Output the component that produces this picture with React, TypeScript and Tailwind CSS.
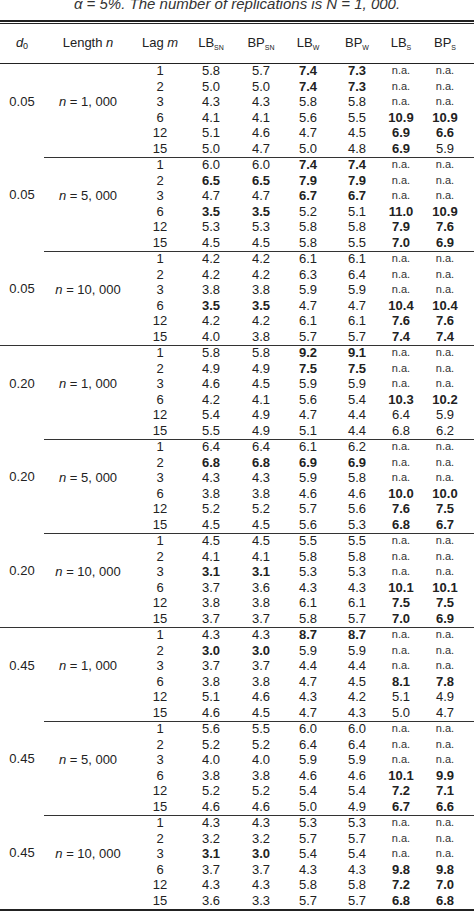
type Block = { n: string; rows: string[][] };
type Group = { d: string; blocks: Block[] };

// "*" prefix = bold
const GROUPS: Group[] = [
  {
    d: '0.05',
    blocks: [
      {
        n: '1, 000',
        rows: [
          ['1', '5.8', '5.7', '*7.4', '*7.3', 'n.a.', 'n.a.'],
          ['2', '5.0', '5.0', '*7.4', '*7.3', 'n.a.', 'n.a.'],
          ['3', '4.3', '4.3', '5.8', '5.8', 'n.a.', 'n.a.'],
          ['6', '4.1', '4.1', '5.6', '5.5', '*10.9', '*10.9'],
          ['12', '5.1', '4.6', '4.7', '4.5', '*6.9', '*6.6'],
          ['15', '5.0', '4.7', '5.0', '4.8', '*6.9', '5.9'],
        ],
      },
      {
        n: '5, 000',
        rows: [
          ['1', '6.0', '6.0', '*7.4', '*7.4', 'n.a.', 'n.a.'],
          ['2', '*6.5', '*6.5', '*7.9', '*7.9', 'n.a.', 'n.a.'],
          ['3', '4.7', '4.7', '*6.7', '*6.7', 'n.a.', 'n.a.'],
          ['6', '*3.5', '*3.5', '5.2', '5.1', '*11.0', '*10.9'],
          ['12', '5.3', '5.3', '5.8', '5.8', '*7.9', '*7.6'],
          ['15', '4.5', '4.5', '5.8', '5.5', '*7.0', '*6.9'],
        ],
      },
      {
        n: '10, 000',
        rows: [
          ['1', '4.2', '4.2', '6.1', '6.1', 'n.a.', 'n.a.'],
          ['2', '4.2', '4.2', '6.3', '6.4', 'n.a.', 'n.a.'],
          ['3', '3.8', '3.8', '5.9', '5.9', 'n.a.', 'n.a.'],
          ['6', '*3.5', '*3.5', '4.7', '4.7', '*10.4', '*10.4'],
          ['12', '4.2', '4.2', '6.1', '6.1', '*7.6', '*7.6'],
          ['15', '4.0', '3.8', '5.7', '5.7', '*7.4', '*7.4'],
        ],
      },
    ],
  },
  {
    d: '0.20',
    blocks: [
      {
        n: '1, 000',
        rows: [
          ['1', '5.8', '5.8', '*9.2', '*9.1', 'n.a.', 'n.a.'],
          ['2', '4.9', '4.9', '*7.5', '*7.5', 'n.a.', 'n.a.'],
          ['3', '4.6', '4.5', '5.9', '5.9', 'n.a.', 'n.a.'],
          ['6', '4.2', '4.1', '5.6', '5.4', '*10.3', '*10.2'],
          ['12', '5.4', '4.9', '4.7', '4.4', '6.4', '5.9'],
          ['15', '5.5', '4.9', '5.1', '4.4', '6.8', '6.2'],
        ],
      },
      {
        n: '5, 000',
        rows: [
          ['1', '6.4', '6.4', '6.1', '6.2', 'n.a.', 'n.a.'],
          ['2', '*6.8', '*6.8', '*6.9', '*6.9', 'n.a.', 'n.a.'],
          ['3', '4.3', '4.3', '5.9', '5.8', 'n.a.', 'n.a.'],
          ['6', '3.8', '3.8', '4.6', '4.6', '*10.0', '*10.0'],
          ['12', '5.2', '5.2', '5.7', '5.6', '*7.6', '*7.5'],
          ['15', '4.5', '4.5', '5.6', '5.3', '*6.8', '*6.7'],
        ],
      },
      {
        n: '10, 000',
        rows: [
          ['1', '4.5', '4.5', '5.5', '5.5', 'n.a.', 'n.a.'],
          ['2', '4.1', '4.1', '5.8', '5.8', 'n.a.', 'n.a.'],
          ['3', '*3.1', '*3.1', '5.3', '5.3', 'n.a.', 'n.a.'],
          ['6', '3.7', '3.6', '4.3', '4.3', '*10.1', '*10.1'],
          ['12', '3.8', '3.8', '6.1', '6.1', '*7.5', '*7.5'],
          ['15', '3.7', '3.7', '5.8', '5.7', '*7.0', '*6.9'],
        ],
      },
    ],
  },
  {
    d: '0.45',
    blocks: [
      {
        n: '1, 000',
        rows: [
          ['1', '4.3', '4.3', '*8.7', '*8.7', 'n.a.', 'n.a.'],
          ['2', '*3.0', '*3.0', '5.9', '5.9', 'n.a.', 'n.a.'],
          ['3', '3.7', '3.7', '4.4', '4.4', 'n.a.', 'n.a.'],
          ['6', '3.8', '3.8', '4.7', '4.5', '*8.1', '*7.8'],
          ['12', '5.1', '4.6', '4.3', '4.2', '5.1', '4.9'],
          ['15', '4.6', '4.5', '4.7', '4.3', '5.0', '4.7'],
        ],
      },
      {
        n: '5, 000',
        rows: [
          ['1', '5.6', '5.5', '6.0', '6.0', 'n.a.', 'n.a.'],
          ['2', '5.2', '5.2', '6.4', '6.4', 'n.a.', 'n.a.'],
          ['3', '4.0', '4.0', '5.9', '5.9', 'n.a.', 'n.a.'],
          ['6', '3.8', '3.8', '4.6', '4.6', '*10.1', '*9.9'],
          ['12', '5.2', '5.2', '5.4', '5.4', '*7.2', '*7.1'],
          ['15', '4.6', '4.6', '5.0', '4.9', '*6.7', '*6.6'],
        ],
      },
      {
        n: '10, 000',
        rows: [
          ['1', '4.3', '4.3', '5.3', '5.3', 'n.a.', 'n.a.'],
          ['2', '3.2', '3.2', '5.7', '5.7', 'n.a.', 'n.a.'],
          ['3', '*3.1', '*3.0', '5.4', '5.4', 'n.a.', 'n.a.'],
          ['6', '3.7', '3.7', '4.3', '4.3', '*9.8', '*9.8'],
          ['12', '4.3', '4.3', '5.8', '5.8', '*7.2', '*7.0'],
          ['15', '3.6', '3.3', '5.7', '5.7', '*6.8', '*6.8'],
        ],
      },
    ],
  },
];

const ROW_COLS = 'grid grid-cols-[56px_46px_54px_40px_58px_30px_58px]';

function Value({ v }: { v: string }) {
  const bold = v.startsWith('*');
  const text = bold ? v.slice(1) : v;
  if (text === 'n.a.') {
    return <span className="text-[11px] text-[#333]">n.a.</span>;
  }
  return <span className={bold ? 'font-bold' : ''}>{text}</span>;
}

function Head({ base, sub }: { base: string; sub: string }) {
  return (
    <span>
      {base}
      <span className="relative top-[3px] text-[7px] uppercase">{sub}</span>
    </span>
  );
}

export default function App() {
  return (
    <div className="w-[474px] overflow-hidden bg-white text-[13px] text-[#222] [font-family:'Liberation_Sans',Arial,sans-serif]">
      <div className="h-[20px] overflow-hidden">
        <p className="-mt-[4px] text-center text-[15px] italic leading-[16px] text-[#333]">
          α = 5%. The number of replications is N = 1, 000.
        </p>
      </div>

      <div className="h-[1.5px] bg-[#222]" />
      <div className="h-[1.5px]" />
      <div className="h-px bg-[#222]" />

      <div className="grid h-[38.5px] grid-cols-[44px_88px_56px_46px_54px_40px_58px_30px_58px] items-center pb-[1px] text-center">
        <span>
          <i>d</i>
          <span className="relative top-[2px] text-[9px]">0</span>
        </span>
        <span>
          Length <i>n</i>
        </span>
        <span>
          Lag <i>m</i>
        </span>
        <Head base="LB" sub="sn" />
        <Head base="BP" sub="sn" />
        <Head base="LB" sub="w" />
        <Head base="BP" sub="w" />
        <Head base="LB" sub="s" />
        <Head base="BP" sub="s" />
      </div>
      <div className="h-[1.5px] bg-[#222]" />

      {GROUPS.map((g, gi) => (
        <div key={g.d + gi} className={gi > 0 ? 'border-t-[1.5px] border-[#333]' : ''}>
          {g.blocks.map((b, bi) => (
            <div key={b.n} className="flex">
              <div className="w-[44px] shrink-0 pt-[31px] text-center leading-[13px]">{g.d}</div>
              <div className={`flex flex-1 ${bi > 0 ? 'border-t border-[#333]' : ''}`}>
                <div className="w-[88px] shrink-0 pt-[31px] text-center leading-[13px]">
                  <i>n</i> = {b.n}
                </div>
                <div className="flex flex-1 flex-col">
                  {b.rows.map((r, ri) => (
                    <div key={ri} className={`${ROW_COLS} h-[15.5px] text-center leading-[13px]`}>
                      {r.map((v, vi) => (
                        <Value key={vi} v={v} />
                      ))}
                    </div>
                  ))}
                </div>
              </div>
            </div>
          ))}
        </div>
      ))}

      <div className="h-[1.5px] bg-[#222]" />
      <div className="h-[1.5px]" />
      <div className="h-[1.5px] bg-[#222]" />
    </div>
  );
}
